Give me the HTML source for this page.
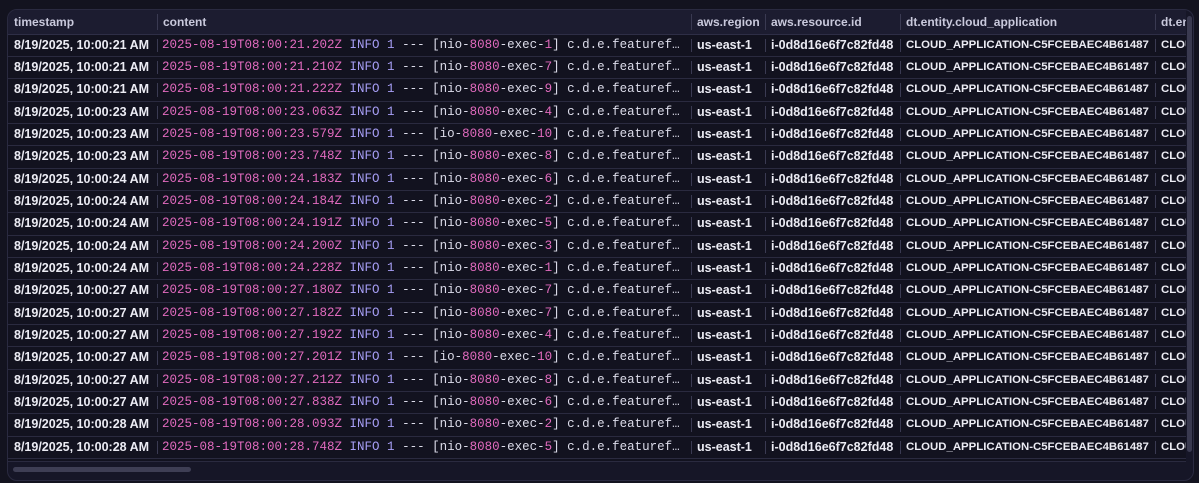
<!DOCTYPE html>
<html><head><meta charset="utf-8"><style>
html,body{margin:0;padding:0;width:1199px;height:483px;background:#13131f;overflow:hidden}
.card{position:absolute;left:7px;top:9px;width:1185px;height:470px;border:1px solid #2a2a40;border-radius:10px;background:#161627;overflow:hidden}
.view{position:absolute;left:0;top:0;width:1178px;height:451px;overflow:hidden}
.hdr{position:absolute;left:0;top:0;height:24px;width:1178px;background:#1c1c30;border-bottom:2px solid #2e2e46}
.row{position:absolute;left:0;height:21.35px;width:1178px;background:#12121f;border-bottom:1px solid #2a2a3f}
.c{position:absolute;top:0;height:100%;white-space:nowrap;overflow:hidden;box-sizing:border-box;padding-left:6px}
.c+.c::before{content:"";position:absolute;left:0;top:4px;bottom:4px;border-left:1px solid #3a3a52}
.hdr .c{font:bold 12px/24px "Liberation Sans",sans-serif;color:#c9c9dc}
.s{font:bold 12.5px/21.5px "Liberation Sans",sans-serif;color:#ececf4}
.c5.s,.c6.s{font-size:11.4px}
.m{font:12.5px/21.5px "Liberation Mono",monospace;color:#dcdcea;padding-left:5px}
.p{color:#e26bbf}.i{color:#a79ef5}
.c1{left:0;width:149px}.c2{left:149px;width:534px}.c3{left:683px;width:74px}.c4{left:757px;width:135px}.c5{left:892px;width:255px}.c6{left:1147px;width:40px}
.vs{position:absolute;left:1179px;top:6px;width:5px;height:436px;background:#3a3a50;border-radius:3px}
.hs{position:absolute;left:5px;top:457px;width:178px;height:5px;background:#3e3e54;border-radius:3px}
.hl{position:absolute;left:0;top:451px;width:1178px;height:1px;background:#2a2a3f}
</style></head><body>
<div class="card">
<div class="view">
<div class="hdr"><div class="c c1">timestamp</div><div class="c c2">content</div><div class="c c3">aws.region</div><div class="c c4">aws.resource.id</div><div class="c c5">dt.entity.cloud_application</div><div class="c c6">dt.en</div></div>

<div class="row" style="top:24.5px"><div class="c c1 s">8/19/2025, 10:00:21 AM</div><div class="c c2 m"><span class="p">2025-08-19T08:00:21.202Z</span> <span class="i">INFO 1</span> --- [nio-<span class="p">8080</span>-exec-<span class="p">1</span>] c.d.e.featuref…</div><div class="c c3 s">us-east-1</div><div class="c c4 s">i-0d8d16e6f7c82fd48</div><div class="c c5 s">CLOUD_APPLICATION-C5FCEBAEC4B61487</div><div class="c c6 s">CLOUD</div></div>
<div class="row" style="top:46.85px"><div class="c c1 s">8/19/2025, 10:00:21 AM</div><div class="c c2 m"><span class="p">2025-08-19T08:00:21.210Z</span> <span class="i">INFO 1</span> --- [nio-<span class="p">8080</span>-exec-<span class="p">7</span>] c.d.e.featuref…</div><div class="c c3 s">us-east-1</div><div class="c c4 s">i-0d8d16e6f7c82fd48</div><div class="c c5 s">CLOUD_APPLICATION-C5FCEBAEC4B61487</div><div class="c c6 s">CLOUD</div></div>
<div class="row" style="top:69.2px"><div class="c c1 s">8/19/2025, 10:00:21 AM</div><div class="c c2 m"><span class="p">2025-08-19T08:00:21.222Z</span> <span class="i">INFO 1</span> --- [nio-<span class="p">8080</span>-exec-<span class="p">9</span>] c.d.e.featuref…</div><div class="c c3 s">us-east-1</div><div class="c c4 s">i-0d8d16e6f7c82fd48</div><div class="c c5 s">CLOUD_APPLICATION-C5FCEBAEC4B61487</div><div class="c c6 s">CLOUD</div></div>
<div class="row" style="top:91.55px"><div class="c c1 s">8/19/2025, 10:00:23 AM</div><div class="c c2 m"><span class="p">2025-08-19T08:00:23.063Z</span> <span class="i">INFO 1</span> --- [nio-<span class="p">8080</span>-exec-<span class="p">4</span>] c.d.e.featuref…</div><div class="c c3 s">us-east-1</div><div class="c c4 s">i-0d8d16e6f7c82fd48</div><div class="c c5 s">CLOUD_APPLICATION-C5FCEBAEC4B61487</div><div class="c c6 s">CLOUD</div></div>
<div class="row" style="top:113.9px"><div class="c c1 s">8/19/2025, 10:00:23 AM</div><div class="c c2 m"><span class="p">2025-08-19T08:00:23.579Z</span> <span class="i">INFO 1</span> --- [io-<span class="p">8080</span>-exec-<span class="p">10</span>] c.d.e.featuref…</div><div class="c c3 s">us-east-1</div><div class="c c4 s">i-0d8d16e6f7c82fd48</div><div class="c c5 s">CLOUD_APPLICATION-C5FCEBAEC4B61487</div><div class="c c6 s">CLOUD</div></div>
<div class="row" style="top:136.25px"><div class="c c1 s">8/19/2025, 10:00:23 AM</div><div class="c c2 m"><span class="p">2025-08-19T08:00:23.748Z</span> <span class="i">INFO 1</span> --- [nio-<span class="p">8080</span>-exec-<span class="p">8</span>] c.d.e.featuref…</div><div class="c c3 s">us-east-1</div><div class="c c4 s">i-0d8d16e6f7c82fd48</div><div class="c c5 s">CLOUD_APPLICATION-C5FCEBAEC4B61487</div><div class="c c6 s">CLOUD</div></div>
<div class="row" style="top:158.6px"><div class="c c1 s">8/19/2025, 10:00:24 AM</div><div class="c c2 m"><span class="p">2025-08-19T08:00:24.183Z</span> <span class="i">INFO 1</span> --- [nio-<span class="p">8080</span>-exec-<span class="p">6</span>] c.d.e.featuref…</div><div class="c c3 s">us-east-1</div><div class="c c4 s">i-0d8d16e6f7c82fd48</div><div class="c c5 s">CLOUD_APPLICATION-C5FCEBAEC4B61487</div><div class="c c6 s">CLOUD</div></div>
<div class="row" style="top:180.95px"><div class="c c1 s">8/19/2025, 10:00:24 AM</div><div class="c c2 m"><span class="p">2025-08-19T08:00:24.184Z</span> <span class="i">INFO 1</span> --- [nio-<span class="p">8080</span>-exec-<span class="p">2</span>] c.d.e.featuref…</div><div class="c c3 s">us-east-1</div><div class="c c4 s">i-0d8d16e6f7c82fd48</div><div class="c c5 s">CLOUD_APPLICATION-C5FCEBAEC4B61487</div><div class="c c6 s">CLOUD</div></div>
<div class="row" style="top:203.3px"><div class="c c1 s">8/19/2025, 10:00:24 AM</div><div class="c c2 m"><span class="p">2025-08-19T08:00:24.191Z</span> <span class="i">INFO 1</span> --- [nio-<span class="p">8080</span>-exec-<span class="p">5</span>] c.d.e.featuref…</div><div class="c c3 s">us-east-1</div><div class="c c4 s">i-0d8d16e6f7c82fd48</div><div class="c c5 s">CLOUD_APPLICATION-C5FCEBAEC4B61487</div><div class="c c6 s">CLOUD</div></div>
<div class="row" style="top:225.65px"><div class="c c1 s">8/19/2025, 10:00:24 AM</div><div class="c c2 m"><span class="p">2025-08-19T08:00:24.200Z</span> <span class="i">INFO 1</span> --- [nio-<span class="p">8080</span>-exec-<span class="p">3</span>] c.d.e.featuref…</div><div class="c c3 s">us-east-1</div><div class="c c4 s">i-0d8d16e6f7c82fd48</div><div class="c c5 s">CLOUD_APPLICATION-C5FCEBAEC4B61487</div><div class="c c6 s">CLOUD</div></div>
<div class="row" style="top:248px"><div class="c c1 s">8/19/2025, 10:00:24 AM</div><div class="c c2 m"><span class="p">2025-08-19T08:00:24.228Z</span> <span class="i">INFO 1</span> --- [nio-<span class="p">8080</span>-exec-<span class="p">1</span>] c.d.e.featuref…</div><div class="c c3 s">us-east-1</div><div class="c c4 s">i-0d8d16e6f7c82fd48</div><div class="c c5 s">CLOUD_APPLICATION-C5FCEBAEC4B61487</div><div class="c c6 s">CLOUD</div></div>
<div class="row" style="top:270.35px"><div class="c c1 s">8/19/2025, 10:00:27 AM</div><div class="c c2 m"><span class="p">2025-08-19T08:00:27.180Z</span> <span class="i">INFO 1</span> --- [nio-<span class="p">8080</span>-exec-<span class="p">7</span>] c.d.e.featuref…</div><div class="c c3 s">us-east-1</div><div class="c c4 s">i-0d8d16e6f7c82fd48</div><div class="c c5 s">CLOUD_APPLICATION-C5FCEBAEC4B61487</div><div class="c c6 s">CLOUD</div></div>
<div class="row" style="top:292.7px"><div class="c c1 s">8/19/2025, 10:00:27 AM</div><div class="c c2 m"><span class="p">2025-08-19T08:00:27.182Z</span> <span class="i">INFO 1</span> --- [nio-<span class="p">8080</span>-exec-<span class="p">7</span>] c.d.e.featuref…</div><div class="c c3 s">us-east-1</div><div class="c c4 s">i-0d8d16e6f7c82fd48</div><div class="c c5 s">CLOUD_APPLICATION-C5FCEBAEC4B61487</div><div class="c c6 s">CLOUD</div></div>
<div class="row" style="top:315.05px"><div class="c c1 s">8/19/2025, 10:00:27 AM</div><div class="c c2 m"><span class="p">2025-08-19T08:00:27.192Z</span> <span class="i">INFO 1</span> --- [nio-<span class="p">8080</span>-exec-<span class="p">4</span>] c.d.e.featuref…</div><div class="c c3 s">us-east-1</div><div class="c c4 s">i-0d8d16e6f7c82fd48</div><div class="c c5 s">CLOUD_APPLICATION-C5FCEBAEC4B61487</div><div class="c c6 s">CLOUD</div></div>
<div class="row" style="top:337.4px"><div class="c c1 s">8/19/2025, 10:00:27 AM</div><div class="c c2 m"><span class="p">2025-08-19T08:00:27.201Z</span> <span class="i">INFO 1</span> --- [io-<span class="p">8080</span>-exec-<span class="p">10</span>] c.d.e.featuref…</div><div class="c c3 s">us-east-1</div><div class="c c4 s">i-0d8d16e6f7c82fd48</div><div class="c c5 s">CLOUD_APPLICATION-C5FCEBAEC4B61487</div><div class="c c6 s">CLOUD</div></div>
<div class="row" style="top:359.75px"><div class="c c1 s">8/19/2025, 10:00:27 AM</div><div class="c c2 m"><span class="p">2025-08-19T08:00:27.212Z</span> <span class="i">INFO 1</span> --- [nio-<span class="p">8080</span>-exec-<span class="p">8</span>] c.d.e.featuref…</div><div class="c c3 s">us-east-1</div><div class="c c4 s">i-0d8d16e6f7c82fd48</div><div class="c c5 s">CLOUD_APPLICATION-C5FCEBAEC4B61487</div><div class="c c6 s">CLOUD</div></div>
<div class="row" style="top:382.1px"><div class="c c1 s">8/19/2025, 10:00:27 AM</div><div class="c c2 m"><span class="p">2025-08-19T08:00:27.838Z</span> <span class="i">INFO 1</span> --- [nio-<span class="p">8080</span>-exec-<span class="p">6</span>] c.d.e.featuref…</div><div class="c c3 s">us-east-1</div><div class="c c4 s">i-0d8d16e6f7c82fd48</div><div class="c c5 s">CLOUD_APPLICATION-C5FCEBAEC4B61487</div><div class="c c6 s">CLOUD</div></div>
<div class="row" style="top:404.45px"><div class="c c1 s">8/19/2025, 10:00:28 AM</div><div class="c c2 m"><span class="p">2025-08-19T08:00:28.093Z</span> <span class="i">INFO 1</span> --- [nio-<span class="p">8080</span>-exec-<span class="p">2</span>] c.d.e.featuref…</div><div class="c c3 s">us-east-1</div><div class="c c4 s">i-0d8d16e6f7c82fd48</div><div class="c c5 s">CLOUD_APPLICATION-C5FCEBAEC4B61487</div><div class="c c6 s">CLOUD</div></div>
<div class="row" style="top:426.8px"><div class="c c1 s">8/19/2025, 10:00:28 AM</div><div class="c c2 m"><span class="p">2025-08-19T08:00:28.748Z</span> <span class="i">INFO 1</span> --- [nio-<span class="p">8080</span>-exec-<span class="p">5</span>] c.d.e.featuref…</div><div class="c c3 s">us-east-1</div><div class="c c4 s">i-0d8d16e6f7c82fd48</div><div class="c c5 s">CLOUD_APPLICATION-C5FCEBAEC4B61487</div><div class="c c6 s">CLOUD</div></div>
<div class="row" style="top:449.15px"><div class="c c1 s">8/19/2025, 10:00:30 AM</div><div class="c c2 m"><span class="p">2025-08-19T08:00:30.170Z</span> <span class="i">INFO 1</span> --- [nio-<span class="p">8080</span>-exec-<span class="p">1</span>] c.d.e.featuref…</div><div class="c c3 s">us-east-1</div><div class="c c4 s">i-0d8d16e6f7c82fd48</div><div class="c c5 s">CLOUD_APPLICATION-C5FCEBAEC4B61487</div><div class="c c6 s">CLOUD</div></div>
</div>
<div class="hl"></div>
<div class="vs"></div>
<div class="hs"></div>
</div>
</body></html>
